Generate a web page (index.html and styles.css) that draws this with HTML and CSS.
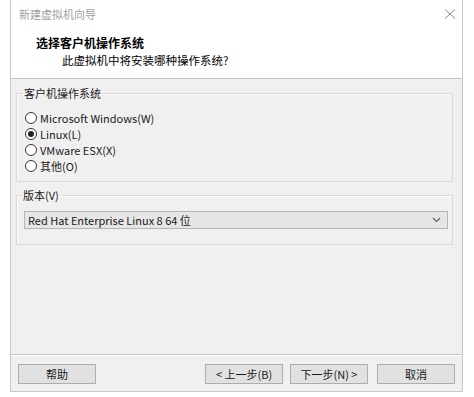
FILE: index.html
```html
<!DOCTYPE html>
<html lang="zh-CN">
<head>
    <meta charset="UTF-8">
    <title>新建虚拟机向导</title>
    <link rel="stylesheet" href="styles.css">
</head>
<body>
    <div class="window">
        <div class="header">
            <div class="titlebar">
                <span class="title">新建虚拟机向导</span>
                <svg class="close" width="12" height="10" viewBox="0 0 12 10">
                    <path d="M1 0.5 L11 9.5 M11 0.5 L1 9.5" stroke="#8a8a8a" stroke-width="1" fill="none"/>
                </svg>
            </div>
            <div class="heading">选择客户机操作系统</div>
            <div class="subheading">此虚拟机中将安装哪种操作系统?</div>
        </div>

        <div class="main">
            <fieldset class="group">
                <legend>客户机操作系统</legend>
                <div class="radio"><span class="dot"></span>Microsoft Windows(W)</div>
                <div class="radio"><span class="dot checked"></span>Linux(L)</div>
                <div class="radio"><span class="dot"></span>VMware ESX(X)</div>
                <div class="radio"><span class="dot"></span>其他(O)</div>
            </fieldset>

            <fieldset class="group version">
                <legend>版本(V)</legend>
                <div class="select">
                    <span>Red Hat Enterprise Linux 8 64 位</span>
                    <svg width="9" height="6" viewBox="0 0 9 6">
                        <path d="M1 1 L4.5 4.5 L8 1" stroke="#606060" stroke-width="1.2" fill="none"/>
                    </svg>
                </div>
            </fieldset>
        </div>

        <div class="footer">
            <button class="btn">帮助</button>
            <span class="spacer"></span>
            <button class="btn">&lt; 上一步(B)</button>
            <button class="btn">下一步(N) &gt;</button>
            <button class="btn cancel">取消</button>
        </div>
    </div>
</body>
</html>
```

FILE: styles.css
```css
body {
    margin: 0;
    background: #ffffff;
    font-family: "Noto Sans CJK SC", "Noto Sans", sans-serif;
    color: #1a1a1a;
}
.window {
    margin-left: 10px;
    width: 451px;
    height: 391px;
    border-left: 1px solid #c8c8c8;
    border-right: 1px solid #c8c8c8;
    border-bottom: 1px solid #c8c8c8;
    display: flex;
    flex-direction: column;
    background: #f0f0f0;
}
.header {
    background: #ffffff;
    border-bottom: 1px solid #c4c4c4;
    box-sizing: border-box;
    height: 79px;
}
.titlebar {
    display: flex;
    justify-content: space-between;
    align-items: center;
    height: 28px;
    padding: 0 6px 0 8px;
}
.title {
    font-size: 11px;
    color: #a0a0a0;
}
.heading {
    font-size: 12px;
    font-weight: bold;
    line-height: 16px;
    padding-left: 25px;
    margin-top: 7px;
    color: #000;
}
.subheading {
    font-size: 11.5px;
    line-height: 16px;
    padding-left: 51px;
    margin-top: 1px;
    color: #000;
}
.main {
    flex: 1;
    padding: 6px 9px 0 5px;
    border-bottom: 1px solid #c8c8c8;
    box-shadow: 0 1px 0 #ffffff;
}
.group {
    margin: 0;
    padding: 9px 8px 7px 8px;
    border: 1px solid #dadada;
    box-shadow: inset 1px 1px 0 #fbfbfb;
}
.group legend {
    font-size: 11px;
    line-height: 16px;
    padding: 0 1px;
    margin-left: -2px;
}
.radio {
    display: flex;
    align-items: center;
    height: 16px;
    font-size: 11px;
    gap: 3px;
}
.dot {
    width: 10px;
    height: 10px;
    border: 1px solid #333;
    border-radius: 50%;
    background: #fff;
    display: flex;
    align-items: center;
    justify-content: center;
}
.dot.checked::after {
    content: "";
    width: 6px;
    height: 6px;
    border-radius: 50%;
    background: #222;
}
.version {
    margin-top: 5px;
    padding: 8px 4px 15px 7px;
}
.select {
    display: flex;
    justify-content: space-between;
    align-items: center;
    height: 16px;
    border: 1px solid #b4b4b4;
    background: #e6e6e6;
    font-size: 11px;
    padding: 0 6px 0 3px;
}
.footer {
    display: flex;
    align-items: flex-start;
    padding: 9px 7px 0 7px;
    height: 36px;
    box-sizing: border-box;
}
.spacer {
    flex: 1;
}
.btn {
    width: 78px;
    height: 20px;
    border: 1px solid #adadad;
    background: #e1e1e1;
    font-family: "Noto Sans CJK SC", "Noto Sans", sans-serif;
    font-size: 11px;
    color: #1a1a1a;
    padding: 0;
    margin-left: 7px;
}
.btn:first-child {
    margin-left: 0;
}
.btn.cancel {
    margin-left: 9px;
}
```
